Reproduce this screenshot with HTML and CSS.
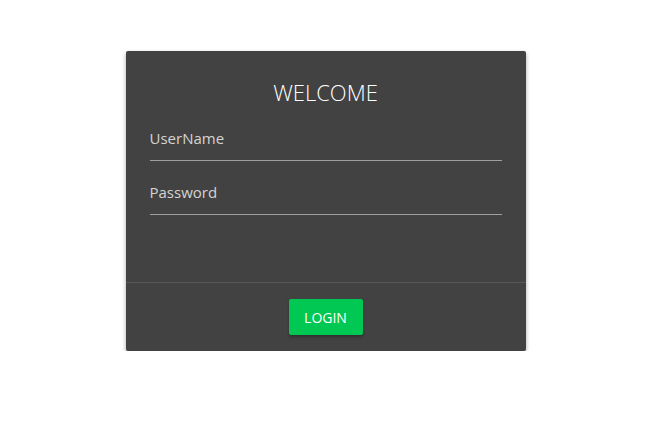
FILE: index.html
```html
<!DOCTYPE html>
<html>
<head>
<meta charset="utf-8">
<link rel="stylesheet" href="styles.css">
</head>
<body>
<div class="page">
  <div class="card">
    <div class="card-body">
      <h1 class="title">WELCOME</h1>
      <div class="field"><span class="label">UserName</span></div>
      <div class="field"><span class="label">Password</span></div>
    </div>
    <div class="card-footer">
      <button class="btn">LOGIN</button>
    </div>
  </div>
</div>
</body>
</html>
```
FILE: styles.css
```css
html, body {
  margin: 0;
  padding: 0;
  background: #ffffff;
  font-family: "Open Sans", "Noto Sans", sans-serif;
}
.page {
  display: flex;
  justify-content: center;
  padding-top: 51px;
}
.card {
  width: 400px;
  background: #424242;
  border-radius: 2px;
  box-shadow: 0 2px 4px rgba(0, 0, 0, 0.35);
}
.card-body {
  height: 231px;
  box-sizing: border-box;
  padding: 26px 24px 0;
}
.title {
  margin: 0;
  font-weight: 300;
  font-size: 22px;
  line-height: 30px;
  text-align: center;
  color: #ffffff;
}
.field {
  margin-top: 21px;
  padding-bottom: 12px;
  border-bottom: 1px solid #a0a0a0;
}
.label {
  display: block;
  font-size: 15px;
  line-height: 20px;
  color: #d4d4d4;
}
.card-footer {
  border-top: 1px solid #585858;
  padding: 16px 0;
  display: flex;
  justify-content: center;
}
.btn {
  width: 74px;
  height: 36px;
  border: none;
  border-radius: 2px;
  background: #00c853;
  color: #ffffff;
  font-family: "Open Sans", "Noto Sans", sans-serif;
  font-size: 14px;
  padding: 0;
  box-shadow: 0 2px 3px rgba(0, 0, 0, 0.3);
}
```
